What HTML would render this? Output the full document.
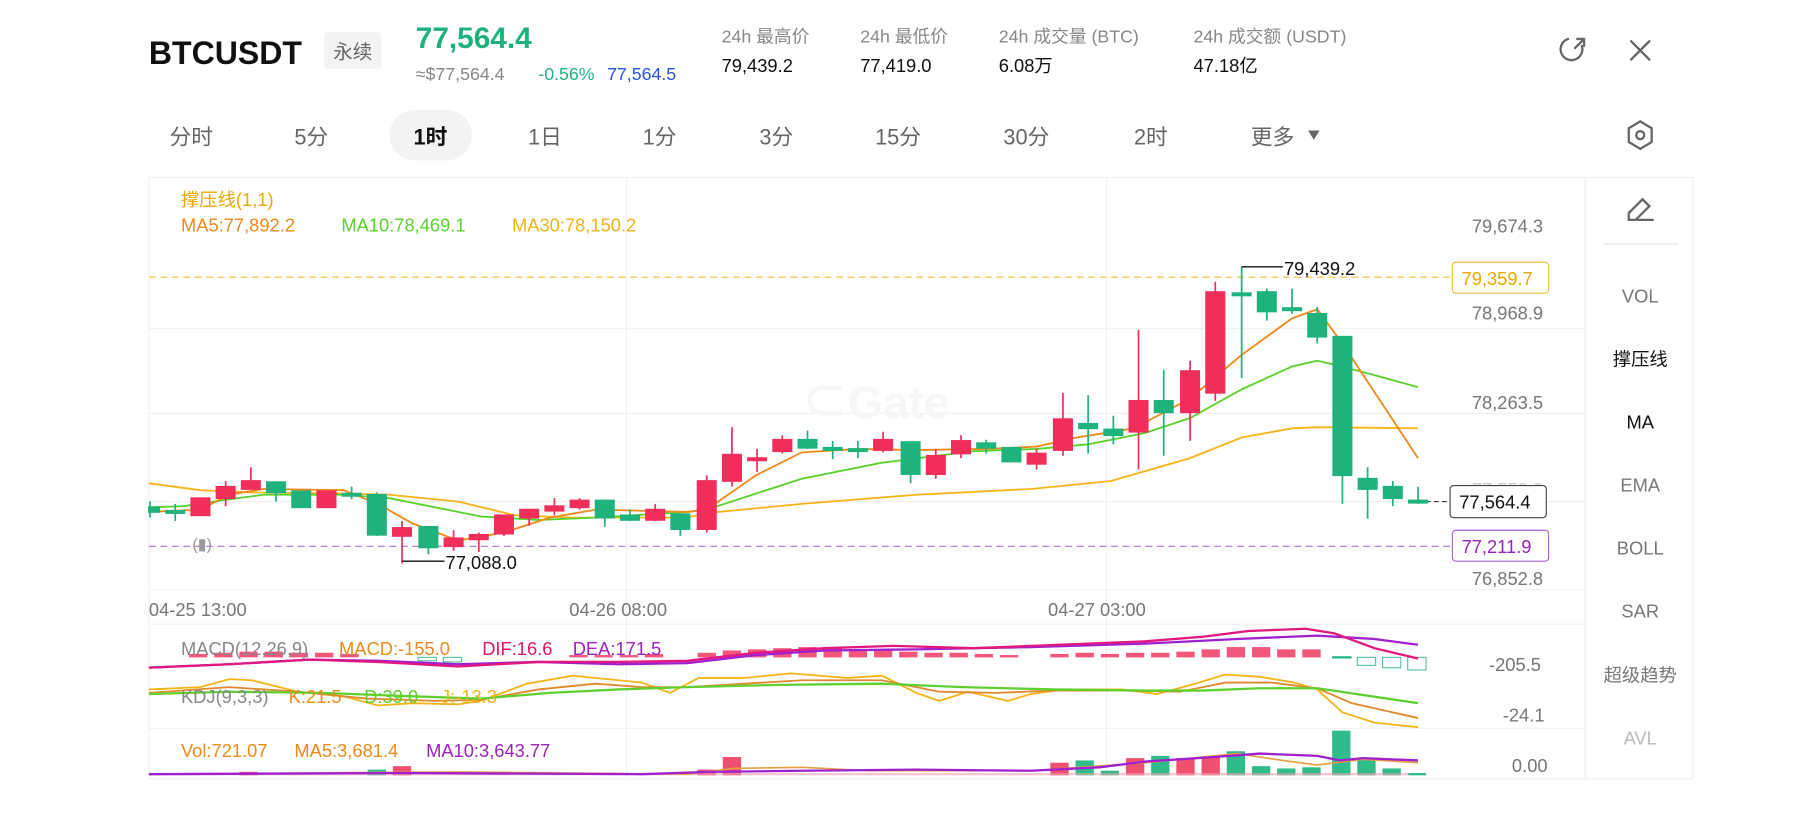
<!DOCTYPE html>
<html><head><meta charset="utf-8"><style>
html,body{margin:0;padding:0;background:#fff;width:1796px;height:828px;overflow:hidden}
svg{display:block}
text{font-family:"Liberation Sans","Noto Sans CJK SC",sans-serif}
</style></head><body>
<svg width="1796" height="828" viewBox="0 0 1568 723" preserveAspectRatio="none" xmlns="http://www.w3.org/2000/svg">
<rect width="1568" height="723" fill="#fff"/>
<text x="130" y="56" font-size="28" font-weight="bold" fill="#111">BTCUSDT</text>
<rect x="283" y="28" width="50" height="32" rx="3" fill="#f2f3f5"/>
<text x="291" y="51" font-size="17" fill="#666">永续</text>
<text x="363" y="42" font-size="26" font-weight="bold" fill="#1fb27c">77,564.4</text>
<text x="363" y="70" font-size="15.5" fill="#888">≈$77,564.4</text>
<text x="470" y="70" font-size="15.5" fill="#1fb27c">-0.56%</text>
<text x="530" y="70" font-size="15.5" fill="#2456e0">77,564.5</text>
<g font-size="15.5" fill="#888">
<text x="630" y="37">24h 最高价</text><text x="751" y="37">24h 最低价</text>
<text x="872" y="37">24h 成交量 (BTC)</text><text x="1042" y="37">24h 成交额 (USDT)</text></g>
<g font-size="16" fill="#111">
<text x="630" y="63">79,439.2</text><text x="751" y="63">77,419.0</text>
<text x="872" y="63">6.08万</text><text x="1042" y="63">47.18亿</text></g>
<g stroke="#666" stroke-width="2" fill="none" stroke-linecap="round">
<path d="M1381 40 A9.5 9.5 0 1 1 1369 34"/><path d="M1375 42 L1383 34 M1377 34 H1383 V40"/>
<path d="M1424 36 L1440 52 M1440 36 L1424 52"/>
<path d="M1432 106 L1442 112 L1442 124 L1432 130 L1422 124 L1422 112 Z"/><circle cx="1432" cy="118" r="3.5"/>
<path d="M1422 192 L1422 186 L1434 174 L1440 180 L1428 192 Z M1430 192 H1443"/>
</g>
<rect x="340" y="96" width="72" height="44" rx="22" fill="#f3f3f3"/>
<g font-size="19" fill="#666">
<text x="148" y="126">分时</text><text x="257" y="126">5分</text>
<text x="361" y="126" fill="#111" font-weight="bold">1时</text>
<text x="461" y="126">1日</text><text x="561" y="126">1分</text><text x="663" y="126">3分</text>
<text x="764" y="126">15分</text><text x="876" y="126">30分</text><text x="990" y="126">2时</text>
<text x="1092" y="126">更多</text></g>
<path d="M1142 114 L1152 114 L1147 122 Z" fill="#666"/>
<g stroke="#f0f0f0" stroke-width="1" fill="none">
<rect x="130" y="155" width="1254" height="525"/>
<rect x="1384" y="155" width="94" height="525"/>
<line x1="130" y1="287" x2="1384" y2="287"/><line x1="130" y1="361" x2="1384" y2="361"/>
<line x1="130" y1="438" x2="1384" y2="438"/><line x1="130" y1="515" x2="1384" y2="515"/>
<line x1="547" y1="155" x2="547" y2="680"/><line x1="966" y1="155" x2="966" y2="680"/>
<line x1="130" y1="545" x2="1384" y2="545"/><line x1="130" y1="636" x2="1384" y2="636"/>
</g>
<line x1="1400" y1="213" x2="1465" y2="213" stroke="#eee" stroke-width="2"/>
<text x="700" y="365" font-size="40" font-weight="bold" fill="#f6f6f6">⊂Gate</text>
<text x="158" y="180" font-size="16" fill="#e8a800">撑压线(1,1)</text>
<text x="158" y="202" font-size="16" fill="#f0891a">MA5:77,892.2</text>
<text x="298" y="202" font-size="16" fill="#5bd12c">MA10:78,469.1</text>
<text x="447" y="202" font-size="16" fill="#f0b41a">MA30:78,150.2</text>
<line x1="130" y1="242" x2="1268" y2="242" stroke="#f0c030" stroke-dasharray="6 4"/>
<line x1="130" y1="477" x2="1268" y2="477" stroke="#b070d0" stroke-dasharray="6 4"/>
<line x1="1238" y1="438" x2="1266" y2="438" stroke="#333" stroke-dasharray="4 3"/>
<g font-size="16" fill="#777">
<text x="1285" y="203">79,674.3</text><text x="1285" y="279">78,968.9</text>
<text x="1285" y="357">78,263.5</text><text x="1285" y="433" fill="#ccc">77,558.2</text>
<text x="1285" y="511">76,852.8</text>
<text x="130" y="538">04-25 13:00</text><text x="497" y="538">04-26 08:00</text><text x="915" y="538">04-27 03:00</text>
</g>
<rect x="1268" y="229" width="84" height="27" rx="3" fill="#fff" stroke="#f0c040"/>
<text x="1276" y="249" font-size="16" fill="#e8a800">79,359.7</text>
<rect x="1266" y="424" width="84" height="28" rx="3" fill="#fff" stroke="#444"/>
<text x="1274" y="444" font-size="16" fill="#111">77,564.4</text>
<rect x="1268" y="463" width="84" height="27" rx="3" fill="#fff" stroke="#b060d0"/>
<text x="1276" y="483" font-size="16" fill="#9a20c0">77,211.9</text>
<g font-size="16" fill="#777" text-anchor="middle">
<text x="1432" y="264">VOL</text><text x="1432" y="319" fill="#111">撑压线</text>
<text x="1432" y="374" fill="#111">MA</text><text x="1432" y="429">EMA</text>
<text x="1432" y="484">BOLL</text><text x="1432" y="539">SAR</text>
<text x="1432" y="595">超级趋势</text><text x="1432" y="650" fill="#bbb">AVL</text></g>
<g fill="none" stroke-width="1.6">
<polyline stroke="#f5b51a" points="130,422 175,428 220,430 300,431 340,432 400,438 450,450 500,452 600,452 617,448 700,440 800,432 900,427 970,420 1039,400 1084,382 1128,374 1150,373 1238,374"/>
<polyline stroke="#5bd12c" points="130,443 160,442 200,436 230,432 300,432 340,435 390,445 420,451 470,454 520,452 600,447 617,445 700,418 770,404 850,394 905,392 950,388 1000,378 1039,365 1084,340 1128,320 1150,315 1172,320 1238,338"/>
<polyline stroke="#f0891a" points="130,447 175,445 200,432 230,427 300,428 330,440 360,457 400,472 440,465 480,452 520,445 600,447 617,445 660,415 700,395 750,392 800,393 860,392 905,390 940,382 990,374 1039,348 1084,310 1128,278 1150,270 1172,300 1238,400"/>
</g>
<g stroke-width="1.5">
<g stroke="#1fb27c" fill="#1fb27c">
<line x1="131" y1="438" x2="131" y2="452"/><rect x="130" y="443" width="9" height="4"/>
<line x1="153" y1="440" x2="153" y2="455"/><rect x="145" y="446" width="16" height="2"/>
<line x1="241" y1="421" x2="241" y2="438"/><rect x="233" y="421" width="16" height="9"/>
<line x1="263" y1="429" x2="263" y2="443"/><rect x="255" y="429" width="16" height="14"/>
<line x1="307" y1="425" x2="307" y2="436"/><rect x="299" y="431" width="16" height="2"/>
<line x1="329" y1="430" x2="329" y2="468"/><rect x="321" y="432" width="16" height="35"/>
<line x1="374" y1="460" x2="374" y2="484"/><rect x="366" y="460" width="16" height="18"/>
<line x1="528" y1="437" x2="528" y2="460"/><rect x="520" y="437" width="16" height="15"/>
<line x1="550" y1="445" x2="550" y2="455"/><rect x="542" y="450" width="16" height="4"/>
<line x1="594" y1="449" x2="594" y2="468"/><rect x="586" y="449" width="16" height="13"/>
<line x1="705" y1="376" x2="705" y2="392"/><rect x="697" y="384" width="16" height="7"/>
<line x1="727" y1="385" x2="727" y2="401"/><rect x="719" y="391" width="16" height="2"/>
<line x1="749" y1="385" x2="749" y2="400"/><rect x="741" y="392" width="16" height="2"/>
<line x1="795" y1="386" x2="795" y2="422"/><rect x="787" y="386" width="16" height="28"/>
<line x1="861" y1="384" x2="861" y2="396"/><rect x="853" y="387" width="16" height="4"/>
<line x1="883" y1="391" x2="883" y2="403"/><rect x="875" y="391" width="16" height="12"/>
<line x1="950" y1="345" x2="950" y2="396"/><rect x="942" y="370" width="16" height="4"/>
<line x1="972" y1="363" x2="972" y2="388"/><rect x="964" y="375" width="16" height="5"/>
<line x1="1016" y1="323" x2="1016" y2="398"/><rect x="1008" y="350" width="16" height="10"/>
<line x1="1084" y1="233" x2="1084" y2="330"/><rect x="1076" y="256" width="16" height="2"/>
<line x1="1106" y1="252" x2="1106" y2="280"/><rect x="1098" y="255" width="16" height="17"/>
<line x1="1128" y1="252" x2="1128" y2="274"/><rect x="1120" y="269" width="16" height="2"/>
<line x1="1150" y1="268" x2="1150" y2="300"/><rect x="1142" y="274" width="16" height="20"/>
<line x1="1172" y1="294" x2="1172" y2="440"/><rect x="1164" y="294" width="16" height="121"/>
<line x1="1194" y1="408" x2="1194" y2="453"/><rect x="1186" y="418" width="16" height="9"/>
<line x1="1216" y1="420" x2="1216" y2="442"/><rect x="1208" y="425" width="16" height="10"/>
<line x1="1238" y1="425" x2="1238" y2="440"/><rect x="1230" y="437" width="16" height="2"/>
</g>
<g stroke="#ef2e5b" fill="#ef2e5b">
<rect x="167" y="435" width="16" height="15"/>
<line x1="197" y1="420" x2="197" y2="442"/><rect x="189" y="425" width="16" height="10"/>
<line x1="219" y1="408" x2="219" y2="427"/><rect x="211" y="420" width="16" height="7"/>
<rect x="277" y="429" width="16" height="14"/>
<line x1="351" y1="455" x2="351" y2="492"/><rect x="343" y="461" width="16" height="7"/>
<line x1="396" y1="463" x2="396" y2="481"/><rect x="388" y="470" width="16" height="7"/>
<line x1="418" y1="465" x2="418" y2="482"/><rect x="410" y="467" width="16" height="4"/>
<line x1="440" y1="450" x2="440" y2="468"/><rect x="432" y="450" width="16" height="16"/>
<line x1="462" y1="445" x2="462" y2="459"/><rect x="454" y="445" width="16" height="7"/>
<line x1="484" y1="435" x2="484" y2="450"/><rect x="476" y="442" width="16" height="4"/>
<line x1="506" y1="435" x2="506" y2="445"/><rect x="498" y="437" width="16" height="6"/>
<line x1="572" y1="440" x2="572" y2="455"/><rect x="564" y="445" width="16" height="9"/>
<line x1="617" y1="415" x2="617" y2="465"/><rect x="609" y="420" width="16" height="42"/>
<line x1="639" y1="373" x2="639" y2="425"/><rect x="631" y="397" width="16" height="23"/>
<line x1="661" y1="392" x2="661" y2="412"/><rect x="653" y="400" width="16" height="2"/>
<line x1="683" y1="380" x2="683" y2="396"/><rect x="675" y="384" width="16" height="10"/>
<line x1="771" y1="377" x2="771" y2="395"/><rect x="763" y="384" width="16" height="9"/>
<line x1="817" y1="392" x2="817" y2="418"/><rect x="809" y="398" width="16" height="16"/>
<line x1="839" y1="380" x2="839" y2="400"/><rect x="831" y="385" width="16" height="11"/>
<line x1="905" y1="392" x2="905" y2="410"/><rect x="897" y="396" width="16" height="9"/>
<line x1="928" y1="343" x2="928" y2="398"/><rect x="920" y="366" width="16" height="27"/>
<line x1="994" y1="288" x2="994" y2="410"/><rect x="986" y="350" width="16" height="27"/>
<line x1="1039" y1="315" x2="1039" y2="385"/><rect x="1031" y="324" width="16" height="36"/>
<line x1="1061" y1="246" x2="1061" y2="350"/><rect x="1053" y="255" width="16" height="88"/>
</g>
</g>
<path d="M351 490 H388 M1084 233 H1120" stroke="#111" stroke-width="1.2"/>
<text x="389" y="497" font-size="16" fill="#111">77,088.0</text>
<text x="1121" y="240" font-size="16" fill="#111">79,439.2</text>
<text x="168" y="480" font-size="14" fill="#999">(▮)</text>
<g fill="#ef2e5b" opacity="0.8">
<rect x="165" y="571" width="16" height="3"/><rect x="187" y="570" width="16" height="4"/><rect x="209" y="569" width="16" height="5"/><rect x="231" y="569" width="16" height="5"/><rect x="253" y="570" width="16" height="4"/><rect x="275" y="570" width="16" height="4"/><rect x="297" y="571" width="16" height="3"/>
<rect x="497" y="572" width="16" height="2"/><rect x="519" y="572" width="16" height="2"/><rect x="541" y="572" width="16" height="2"/><rect x="563" y="571" width="16" height="3"/><rect x="609" y="570" width="16" height="4"/><rect x="631" y="568" width="16" height="6"/><rect x="653" y="567" width="16" height="7"/><rect x="675" y="566" width="16" height="8"/>
<rect x="697" y="565" width="16" height="9"/><rect x="719" y="566" width="16" height="8"/><rect x="741" y="567" width="16" height="7"/><rect x="763" y="568" width="16" height="6"/><rect x="785" y="569" width="16" height="5"/><rect x="807" y="570" width="16" height="4"/><rect x="829" y="570" width="16" height="4"/><rect x="851" y="571" width="16" height="3"/><rect x="873" y="572" width="16" height="2"/><rect x="917" y="571" width="16" height="3"/><rect x="939" y="570" width="16" height="4"/><rect x="961" y="571" width="16" height="3"/><rect x="983" y="570" width="16" height="4"/><rect x="1005" y="570" width="16" height="4"/><rect x="1027" y="569" width="16" height="5"/><rect x="1049" y="567" width="16" height="7"/><rect x="1071" y="565" width="16" height="9"/><rect x="1093" y="565" width="16" height="9"/><rect x="1115" y="567" width="16" height="7"/><rect x="1137" y="567" width="16" height="7"/></g>
<g fill="none" stroke="#5cc0a0"><rect x="365" y="574" width="16" height="3"/><rect x="387" y="574" width="16" height="4"/><rect x="1185" y="574" width="16" height="7"/><rect x="1207" y="574" width="16" height="9"/><rect x="1229" y="574" width="16" height="11"/></g>
<line x1="1163" y1="574" x2="1180" y2="574" stroke="#1fb27c" stroke-width="2"/>
<polyline fill="none" stroke="#a020d0" stroke-width="2" points="130,583 200,580 270,576 330,577 400,580 470,578 540,580 600,579 660,572 720,568 800,567 900,565 1000,562 1080,558 1150,555 1200,558 1238,563"/>
<polyline fill="none" stroke="#e0187f" stroke-width="2" points="130,583 200,580 270,576 330,578 400,582 470,578 540,578 600,577 660,570 720,566 780,564 850,566 900,564 1000,560 1050,556 1090,551 1140,549 1165,553 1200,566 1238,575"/>
<text x="158" y="572" font-size="16" fill="#888">MACD(12,26,9)</text>
<text x="296" y="572" font-size="16" fill="#f0891a">MACD:-155.0</text>
<text x="421" y="572" font-size="16" fill="#e0185f">DIF:16.6</text>
<text x="500" y="572" font-size="16" fill="#a020c0">DEA:171.5</text>
<text x="1300" y="586" font-size="16" fill="#777">-205.5</text>
<polyline fill="none" stroke="#f5b51a" stroke-width="1.6" points="130,602 175,600 200,593 220,594 260,604 300,608 330,616 360,614 400,615 420,612 460,597 500,590 530,593 560,596 585,605 610,592 650,592 690,588 740,592 770,590 800,605 820,612 845,604 880,612 900,606 930,602 980,602 1010,606 1040,598 1070,589 1100,591 1130,596 1150,602 1172,622 1200,631 1238,635"/>
<polyline fill="none" stroke="#e08a30" stroke-width="1.6" points="130,605 200,600 260,604 320,610 380,612 420,611 470,602 520,597 560,600 600,600 650,597 700,594 770,594 820,604 870,605 920,603 980,603 1030,604 1070,596 1110,596 1150,601 1180,614 1238,627"/>
<polyline fill="none" stroke="#60d030" stroke-width="2" points="130,606 200,604 280,605 360,608 420,610 480,605 540,602 600,600 680,598 770,597 840,600 920,602 1000,603 1050,603 1100,601 1150,601 1238,614"/>
<text x="158" y="614" font-size="16" fill="#888">KDJ(9,3,3)</text>
<text x="252" y="614" font-size="16" fill="#f0891a">K:21.5</text>
<text x="318" y="614" font-size="16" fill="#5bd12c">D:39.0</text>
<text x="385" y="614" font-size="16" fill="#f0b41a">J:-13.3</text>
<text x="1312" y="630" font-size="16" fill="#777">-24.1</text>
<g fill="#f0506f"><rect x="209" y="674" width="16" height="3"/><rect x="343" y="669" width="16" height="8"/><rect x="609" y="672" width="16" height="5"/><rect x="631" y="661" width="16" height="16"/><rect x="917" y="666" width="16" height="11"/><rect x="983" y="662" width="16" height="15"/><rect x="1027" y="662" width="16" height="15"/><rect x="1049" y="661" width="16" height="16"/></g>
<g fill="#30bb8a"><rect x="321" y="672" width="16" height="5"/><rect x="939" y="664" width="16" height="13"/><rect x="961" y="673" width="16" height="4"/><rect x="1005" y="660" width="16" height="17"/><rect x="1071" y="656" width="16" height="21"/><rect x="1093" y="669" width="16" height="8"/><rect x="1115" y="671" width="16" height="6"/><rect x="1137" y="670" width="16" height="7"/><rect x="1163" y="638" width="16" height="39"/><rect x="1185" y="662" width="16" height="15"/><rect x="1207" y="671" width="16" height="6"/><rect x="1229" y="675" width="16" height="2"/></g>
<g fill="#f0a0b0" opacity="0.6"><rect x="130" y="675" width="1100" height="2"/></g>
<polyline fill="none" stroke="#e8a040" stroke-width="1.4" points="130,676 400,674 600,676 640,671 700,670 760,673 900,673 1000,666 1080,658 1120,664 1150,668 1190,663 1238,666"/>
<polyline fill="none" stroke="#a020d0" stroke-width="2" points="130,676 350,675 560,676 620,674 700,673 800,672 900,673 960,670 1000,665 1060,661 1100,658 1150,660 1170,664 1190,662 1238,664"/>
<text x="158" y="661" font-size="16" fill="#f0891a">Vol:721.07</text>
<text x="257" y="661" font-size="16" fill="#f0891a">MA5:3,681.4</text>
<text x="372" y="661" font-size="16" fill="#a020c0">MA10:3,643.77</text>
<text x="1320" y="674" font-size="16" fill="#777">0.00</text>
</svg>
</body></html>
